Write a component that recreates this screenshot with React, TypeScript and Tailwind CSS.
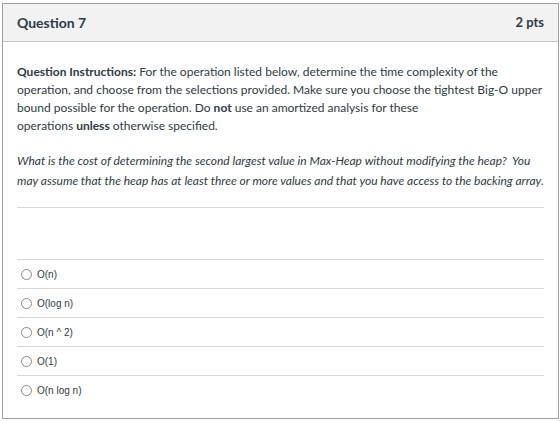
import React from "react";

const answers = ["O(n)", "O(log n)", "O(n ^ 2)", "O(1)", "O(n log n)"];

export default function App() {
  return (
    <div className="w-[560px] h-[421px] bg-white pt-[3px] pl-[2px]" style={{ fontFamily: "Lato, 'Liberation Sans', sans-serif" }}>
      <div className="w-[557px] h-[416px] border border-[#a0a0a0] flex flex-col overflow-hidden">
        <div className="shrink-0 h-[38px] bg-[#f2f2f2] border-b border-[#c4c4c4] flex items-center justify-between pl-[14px] pr-[14px]">
          <span className="text-[14px] font-bold text-[#2d3b45]">Question 7</span>
          <span className="text-[13px] font-bold text-[#2d3b45]">2 pts</span>
        </div>
        <div className="px-[14px] pt-[21px]">
          <p className="text-[12px] leading-[18px] text-[#2d3b45] whitespace-nowrap">
            <b>Question Instructions:</b> For the operation listed below, determine the time complexity of the
            <br />
            operation, and choose from the selections provided. Make sure you choose the tightest Big-O upper
            <br />
            bound possible for the operation. Do <b>not</b> use an amortized analysis for these
            <br />
            operations <b>unless</b> otherwise specified.
          </p>
          <p className="mt-[16px] text-[12px] leading-[20px] italic text-[#2d3b45] whitespace-nowrap">
            What is the cost of determining the second largest value in Max-Heap without modifying the heap?&nbsp; You
            <br />
            may assume that the heap has at least three or more values and that you have access to the backing array.
          </p>
          <div className="mt-[16px] w-[527px] border-t border-[#d6d6d6]" />
          <div className="mt-[51px] w-[527px] border-t border-[#d6d6d6]">
            {answers.map((a, i) => (
              <div key={a} className={`h-[29px] flex items-center ${i < answers.length - 1 ? "border-b border-[#d6d6d6]" : ""}`}>
                <span className="ml-[4px] w-[11px] h-[11px] rounded-full border border-[#8a8a8a] bg-white" />
                <span className="ml-[5px] text-[10px] text-[#2d3b45]" style={{ fontFamily: "'Liberation Sans', Arial, sans-serif" }}>{a}</span>
              </div>
            ))}
          </div>
        </div>
      </div>
    </div>
  );
}
